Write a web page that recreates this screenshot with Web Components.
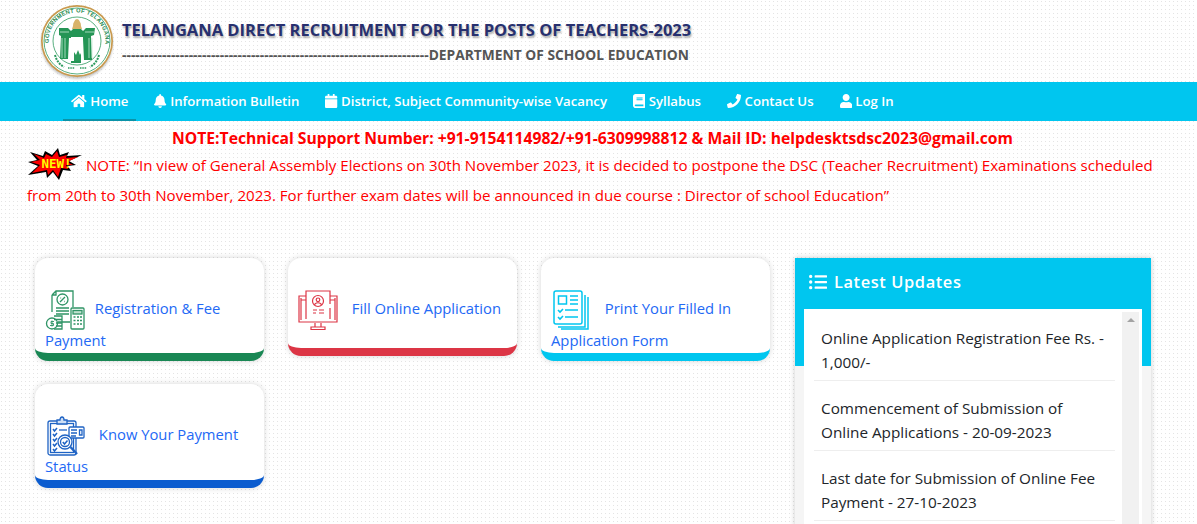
<!DOCTYPE html>
<html lang="en">
<head>
<meta charset="utf-8">
<title>Telangana DSC 2023</title>
<style>
    html, body { margin: 0; height: 524px; overflow: hidden; }
    body {
        font-family: "Open Sans", "Noto Sans", sans-serif;
        background-color: #fff;
        background-image: radial-gradient(circle at 1.5px 1.5px, #e4e4e4 0.7px, transparent 1px);
        background-size: 4px 4px;
    }
</style>
</head>
<body>
<site-header></site-header>
<nav-bar>
    <nav-item icon="home" active>Home</nav-item>
    <nav-item icon="bell">Information Bulletin</nav-item>
    <nav-item icon="calendar">District, Subject Community-wise Vacancy</nav-item>
    <nav-item icon="book">Syllabus</nav-item>
    <nav-item icon="phone">Contact Us</nav-item>
    <nav-item icon="user">Log In</nav-item>
</nav-bar>
<notice-block></notice-block>
<main-area>
    <service-card slot="cards" color="#198754" gap="6" style="--min:103px">
        <svg slot="icon" width="40" height="40" viewBox="0 0 40 40" fill="none" stroke="#2f9466" stroke-width="1.3">
            <path d="M7 5 11 1H28V17M7 5V22M7 5H11V1"/>
            <circle cx="17.5" cy="9.5" r="5.5"/><path d="M15 12 20 7M15.5 8h.6M19 11.5h.6"/>
            <path d="M11 18H24M11 21H24M11 24H24M13 32H25"/>
            <rect x="26" y="18" width="13" height="21" rx="1"/><rect x="28" y="20.5" width="9" height="3.5" fill="#bfe0cf"/>
            <path d="M28.5 27h2M32 27h2M35 27h2M28.5 30.500h2M32 30.500h2M35 30.500h2M28.500 34h2M32 34h2M35 34h2" stroke-width="1.6"/>
            <circle cx="7" cy="33.500" r="5.500"/><path d="M7 30.500v6M9 31.500H6v2h2.500v2H5" stroke-width=".9"/>
            <path d="M9 26H17V39H9M9 29.500H17M11 33H17M11 36H17"/>
        </svg>
        Registration &amp; Fee Payment
    </service-card>
    <service-card slot="cards" color="#dc3545" gap="10">
        <svg slot="icon" width="40" height="40" viewBox="0 0 40 40" fill="none" stroke="#dc3545" stroke-width="1.2">
            <path d="M8 6H1V32H39V6H32M3 8V30M37 8V30"/>
            <path d="M3 10H8M32 10H37"/>
            <path d="M8 29V1H32V14M32 18V29"/>
            <circle cx="20" cy="11" r="5.500"/><circle cx="20" cy="9.800" r="1.800"/><path d="M16.500 15c.6-3 6.400-3 7 0"/>
            <path d="M15 20H19M21 20H26M15 23H18M21 23H26"/>
            <path d="M17 33V37M23 33V37M13 39.500H27V37H13Z"/>
        </svg>
        Fill Online Application
    </service-card>
    <service-card slot="cards" color="#00c6ef" gap="11" style="--min:103px">
        <svg slot="icon" width="37" height="40" viewBox="0 0 37 40" fill="none" stroke="#00c6ef" stroke-width="1.500" style="margin-left:2px">
            <rect x="1" y="1" width="28" height="33" rx="2"/>
            <path d="M32 5V37H5M35 7V39H8"/>
            <rect x="5.500" y="6" width="8" height="8"/>
            <path d="M17 6H25M17 10H25M17 14H25M12 20H25M12 27H25" stroke-width="1.400"/>
            <path d="M5 20 7 22 10 19M5 27 7 29 10 26" stroke-width="1.600"/>
        </svg>
        Print Your Filled In Application Form
    </service-card>
    <service-card slot="cards" color="#0b5ccf" gap="10" style="--min:104px">
        <svg slot="icon" width="38" height="40" viewBox="0 0 38 40" fill="none" stroke="#1f63c4" stroke-width="1.300" style="margin-left:2px">
            <rect x="1" y="5" width="28" height="34" rx="2"/>
            <rect x="3.500" y="7.500" width="23" height="29"/>
            <path d="M10 8V4H13C13 0 17 0 17 4H20V8H10Z" fill="#cfe0f6"/>
            <path d="M6 13 7.500 15 10 12M6 18 7.500 20 10 17M6 23 7.500 25 10 22M6 28 7.500 30 10 27M6 33 7.500 35 10 32" stroke-width="1.500"/>
            <path d="M12 14H20"/>
            <rect x="22" y="11" width="15" height="11" rx="1" fill="#fff"/>
            <path d="M24 14H30M24 17H30M24 20H29M32.500 14H35V19H32.500Z"/>
            <circle cx="18" cy="26" r="7" fill="#fff"/><circle cx="18" cy="26" r="4.500"/>
            <path d="M15.800 26 17.500 28 20.500 24.500" stroke-width="1.500"/>
            <path d="M23.500 31 30 38" stroke-width="2.400"/>
        </svg>
        Know Your Payment Status
    </service-card>
    <updates-panel slot="side">
        <update-item>Online Application Registration Fee Rs. - 1,000/-</update-item>
        <update-item>Commencement of Submission of Online Applications - 20-09-2023</update-item>
        <update-item>Last date for Submission of Online Fee Payment - 27-10-2023</update-item>
    </updates-panel>
</main-area>

<script>
const ICONS = {
    home: ["0 0 576 512", "M280.37 148.26L96 300.11V464a16 16 0 0 0 16 16l112.06-.29a16 16 0 0 0 15.92-16V368a16 16 0 0 1 16-16h64a16 16 0 0 1 16 16v95.64a16 16 0 0 0 16 16.05L464 480a16 16 0 0 0 16-16V300L295.67 148.26a12.19 12.19 0 0 0-15.3 0zM571.6 251.47L488 182.56V44.05a12 12 0 0 0-12-12h-56a12 12 0 0 0-12 12v72.61L318.47 43a48 48 0 0 0-61 0L4.34 251.47a12 12 0 0 0-1.6 16.9l25.5 31A12 12 0 0 0 45.15 301l235.22-193.74a12.19 12.19 0 0 1 15.3 0L530.9 301a12 12 0 0 0 16.9-1.6l25.5-31a12 12 0 0 0-1.7-16.93z"],
    bell: ["0 0 448 512", "M224 512c35.32 0 63.97-28.65 63.97-64H160.03c0 35.35 28.65 64 63.97 64zm215.39-149.71c-19.32-20.76-55.47-51.99-55.47-154.29 0-77.7-54.48-139.9-127.94-155.16V32c0-17.67-14.32-32-31.98-32s-31.98 14.33-31.98 32v20.84C118.56 68.1 64.08 130.3 64.08 208c0 102.3-36.15 133.53-55.47 154.29-6 6.45-8.66 14.16-8.61 21.71.11 16.4 12.98 32 32.1 32h383.8c19.12 0 32-15.6 32.1-32 .05-7.55-2.61-15.27-8.61-21.71z"],
    calendar: ["0 0 448 512", "M12 192h424c6.6 0 12 5.4 12 12v260c0 26.5-21.5 48-48 48H48c-26.5 0-48-21.5-48-48V204c0-6.6 5.4-12 12-12zm436-44v-36c0-26.5-21.5-48-48-48h-48V12c0-6.6-5.4-12-12-12h-40c-6.6 0-12 5.4-12 12v52H160V12c0-6.6-5.4-12-12-12h-40c-6.6 0-12 5.4-12 12v52H48C21.5 64 0 85.5 0 112v36c0 6.6 5.4 12 12 12h424c6.6 0 12-5.4 12-12z"],
    book: ["0 0 448 512", "M448 360V24c0-13.3-10.7-24-24-24H96C43 0 0 43 0 96v320c0 53 43 96 96 96h328c13.3 0 24-10.7 24-24v-16c0-7.5-3.5-14.3-8.9-18.7-4.2-15.4-4.2-59.3 0-74.7 5.4-4.3 8.9-11.1 8.9-18.6zM128 134c0-3.3 2.7-6 6-6h212c3.3 0 6 2.7 6 6v20c0 3.3-2.7 6-6 6H134c-3.3 0-6-2.7-6-6v-20zm0 64c0-3.3 2.7-6 6-6h212c3.3 0 6 2.7 6 6v20c0 3.3-2.7 6-6 6H134c-3.3 0-6-2.7-6-6v-20zm253.4 250H96c-17.7 0-32-14.3-32-32 0-17.6 14.4-32 32-32h285.4c-1.9 17.1-1.9 46.9 0 64z"],
    phone: ["0 0 512 512", "M493.4 24.6l-104-24c-11.3-2.6-22.9 3.3-27.5 13.9l-48 112c-4.2 9.8-1.4 21.3 6.9 28l60.6 49.6c-36 76.7-98.9 140.5-177.2 177.2l-49.6-60.6c-6.8-8.3-18.2-11.1-28-6.9l-112 48C3.9 366.5-2 378.1.6 389.4l24 104C27.1 504.2 36.7 512 48 512c256.1 0 464-207.5 464-464 0-11.2-7.7-20.9-18.6-23.4z"],
    user: ["0 0 448 512", "M224 256c70.7 0 128-57.3 128-128S294.7 0 224 0 96 57.3 96 128s57.3 128 128 128zm89.6 32h-16.7c-22.2 10.2-46.9 16-72.9 16s-50.6-5.8-72.9-16h-16.7C60.2 288 0 348.2 0 422.4V464c0 26.5 21.5 48 48 48h352c26.5 0 48-21.5 48-48v-41.6c0-74.2-60.2-134.4-134.4-134.4z"],
    list: ["0 0 512 512", "M48 48a48 48 0 1 0 48 48 48 48 0 0 0-48-48zm0 160a48 48 0 1 0 48 48 48 48 0 0 0-48-48zm0 160a48 48 0 1 0 48 48 48 48 0 0 0-48-48zm448 16H176a16 16 0 0 0-16 16v32a16 16 0 0 0 16 16h320a16 16 0 0 0 16-16v-32a16 16 0 0 0-16-16zm0-320H176a16 16 0 0 0-16 16v32a16 16 0 0 0 16 16h320a16 16 0 0 0 16-16V80a16 16 0 0 0-16-16zm0 160H176a16 16 0 0 0-16 16v32a16 16 0 0 0 16 16h320a16 16 0 0 0 16-16v-32a16 16 0 0 0-16-16z"]
};

function faIcon(name, height) {
    const [box, d] = ICONS[name];
    const parts = box.split(" ");
    const width = height * parts[2] / parts[3];
    return `<svg width="${width}" height="${height}" viewBox="${box}" fill="currentColor"><path d="${d}"/></svg>`;
}

class StateEmblem extends HTMLElement {
    constructor() {
        super();
        this.attachShadow({ mode: "open" }).innerHTML = `
            <style>
                :host { display: block; width: 74px; height: 78px; }
                svg { display: block; }
                text { font-family: "Liberation Sans", sans-serif; }
            </style>
            <svg width="74" height="78" viewBox="0 0 74 78">
                <defs>
                    <path id="ring" d="M9.400 44a28.300 28.300 0 1 1 55.200 0"/>
                    <filter id="soft"><feGaussianBlur stdDeviation="1.200"/></filter>
                </defs>
                <circle cx="37" cy="40" r="36" fill="#999" opacity=".55" filter="url(#soft)"/>
                <circle cx="37" cy="38" r="36" fill="#c99a4e"/>
                <circle cx="37" cy="38" r="34.300" fill="#fff"/>
                <circle cx="37" cy="38" r="33" fill="none" stroke="#2e9b5f" stroke-width=".8"/>
                <circle cx="37" cy="38" r="24" fill="#fff" stroke="#2e9b5f" stroke-width=".8"/>
                <text font-size="5.700" font-weight="700" fill="#1f8a50" letter-spacing=".3"><textPath href="#ring" startOffset="4">GOVERNMENT OF TELANGANA</textPath></text>
                <path d="M33 23q0-3 1-4 1-3 3-3t3 3q1 1 1 4l1 3H32z" fill="#d8b36a"/>
                <path d="M19 25h9l3 3 2-2h8l2 2 3-3h9l-1 7-3 1 1 24h-8l-1-21h-2v24H31V35h-2l-1 21h-8l1-23-2-1z" fill="#249555"/>
                <rect x="31" y="34" width="12" height="24" fill="#fff"/>
                <path d="M22 35v20M25 35v20M49 35v20M52 35v20M20 29h9M45 29h9" stroke="#c7ead6" stroke-width=".8"/>
                <path d="M34 58v-9l2 3 2-5 2 5 1-2v8z" fill="#2b9a5b"/>
                <path d="M15 52q2 8 9 12M59 52q-2 8-9 12" fill="none" stroke="#2e9b5f" stroke-width="2" stroke-dasharray="2 1"/>
                <path d="M28 65h7M40 65h7" stroke="#2e9b5f" stroke-width="1.600" stroke-dasharray="1.500 .8"/>
            </svg>`;
    }
}
customElements.define("state-emblem", StateEmblem);

class SiteHeader extends HTMLElement {
    constructor() {
        super();
        this.attachShadow({ mode: "open" }).innerHTML = `
            <style>
                :host { display: flex; height: 82px; padding: 3px 0 0 40px; box-sizing: border-box; gap: 8px; }
                .text { display: flex; flex-direction: column; padding-top: 16px; white-space: nowrap; }
                h1 {
                    margin: 0;
                    font-size: 16.5px;
                    line-height: 22px;
                    font-weight: 700;
                    color: #27306f;
                    text-shadow: 1px 2px 2px #aaa;
                }
                p { margin: 4px 0 0; font-size: 13.750px; line-height: 20px; font-weight: 700; color: #555; letter-spacing: 0.02px; }
            </style>
            <state-emblem></state-emblem>
            <div class="text">
                <h1>TELANGANA DIRECT RECRUITMENT FOR THE POSTS OF TEACHERS-2023</h1>
                <p>${"-".repeat(69)}DEPARTMENT OF SCHOOL EDUCATION</p>
            </div>`;
    }
}
customElements.define("site-header", SiteHeader);

class NavBar extends HTMLElement {
    constructor() {
        super();
        this.attachShadow({ mode: "open" }).innerHTML = `
            <style>
                :host { display: flex; height: 39px; background: #00c6ef; padding-left: 63px; gap: 10px; }
            </style>
            <slot></slot>`;
    }
}
customElements.define("nav-bar", NavBar);

class NavItem extends HTMLElement {
    constructor() {
        super();
        this.attachShadow({ mode: "open" }).innerHTML = `
            <style>
                :host {
                    display: flex;
                    align-items: center;
                    gap: 3.500px;
                    height: 39px;
                    box-sizing: border-box;
                    padding: 0 8px;
                    color: #fff;
                    font-size: 13.200px;
                    font-weight: 600;
                    white-space: nowrap;
                    border-bottom: 2px solid transparent;
                }
                :host([active]) { border-bottom-color: #0a93a8; }
            </style>
            ${faIcon(this.getAttribute("icon"), 14)}
            <slot></slot>`;
    }
}
customElements.define("nav-item", NavItem);

class NoticeBlock extends HTMLElement {
    constructor() {
        super();
        this.attachShadow({ mode: "open" }).innerHTML = `
            <style>
                :host { display: block; color: #f00; padding: 5px 27px 0; }
                .support { margin: 0 -27px; padding-right: 12px; text-align: center; font-size: 15.700px; line-height: 24px; font-weight: 700; }
                .note { margin: 0; font-size: 15.100px; line-height: 30px; height: 60px; }
                .burst { display: inline-block; vertical-align: middle; margin: -6px 0 0 0; }
                text { font-family: "DejaVu Sans Mono", monospace; }
            </style>
            <p class="support">NOTE:Technical Support Number: +91-9154114982/+91-6309998812 &amp; Mail ID: helpdesktsdsc2023@gmail.com</p>
            <p class="note"><svg class="burst" width="59" height="32" viewBox="0 0 59 32">
                <path d="M3 4 16 8 18 3 25 7 31 0 33 7 42 4 40 8 55 7 42 13 49 17 41 18 44 23 36 22 32 32 26 24 20 30 19 24 1 27 11 18 1 14 10 12Z" fill="#000"/>
                <path d="M7 6 17 10 19 6 25 9 30 3 32 9 40 7 39 10 51 9 40 14 46 17 39 17 41 21 34 20 31 29 26 22 21 27 20 22 5 25 13 17 4 14 13 12Z" fill="#f00"/>
                <text x="14.500" y="19.500" font-size="12.500" font-weight="700" fill="#ff0">NEW!</text>
            </svg>NOTE: &ldquo;In view of General Assembly Elections on 30th November 2023, it is decided to postpone the DSC (Teacher Recruitment) Examinations scheduled from 20th to 30th November, 2023. For further exam dates will be announced in due course : Director of school Education&rdquo;</p>`;
    }
}
customElements.define("notice-block", NoticeBlock);

class MainArea extends HTMLElement {
    constructor() {
        super();
        this.attachShadow({ mode: "open" }).innerHTML = `
            <style>
                :host { display: flex; margin-top: 48px; padding-left: 35px; gap: 25px; align-items: flex-start; }
                .cards { display: grid; grid-template-columns: repeat(3, 229px); column-gap: 24px; row-gap: 23px; align-items: start; width: 735px; }
            </style>
            <div class="cards"><slot name="cards"></slot></div>
            <slot name="side"></slot>`;
    }
}
customElements.define("main-area", MainArea);

class ServiceCard extends HTMLElement {
    constructor() {
        super();
        this.attachShadow({ mode: "open" }).innerHTML = `
            <style>
                :host {
                    display: block;
                    box-sizing: border-box;
                    min-height: var(--min, 98px);
                    padding: 32px 9px 1px 10px;
                    background: #fff;
                    border-radius: 13px;
                    border-bottom: 8px solid ${this.getAttribute("color")};
                    box-shadow: 0 0 6px rgba(0, 0, 0, 0.16);
                    color: #2369f5;
                    font-size: 14.800px;
                    font-weight: 500;
                    line-height: 20px;
                }
                ::slotted(svg) { display: inline-block; vertical-align: middle; margin-right: ${this.getAttribute("gap")}px; }
            </style>
            <slot name="icon"></slot><slot></slot>`;
    }
}
customElements.define("service-card", ServiceCard);

class UpdatesPanel extends HTMLElement {
    constructor() {
        super();
        this.attachShadow({ mode: "open" }).innerHTML = `
            <style>
                :host {
                    display: block;
                    box-sizing: border-box;
                    width: 356px;
                    height: 420px;
                    padding: 0 9px;
                    background: linear-gradient(#00c6ef 108px, #f5f5f5 108px);
                    box-shadow: 0 0 6px rgba(0, 0, 0, 0.2);
                }
                h2 {
                    display: flex;
                    align-items: center;
                    gap: 7px;
                    margin: 0;
                    height: 51px;
                    box-sizing: border-box;
                    padding: 0 0 4px 5px;
                    color: #fff;
                    font-size: 16.400px;
                    font-weight: 600;
                    letter-spacing: 0.6px;
                }
                .box { display: flex; background: #fff; height: 300px; padding: 2px 3px; box-sizing: border-box; }
                .list { flex: 1; padding-left: 7px; padding-right: 7px; }
                .bar { width: 17px; margin-top: 1px; background: #f1f1f1; flex: none; position: relative; }
                .bar::before {
                    content: "";
                    position: absolute;
                    left: 5px;
                    top: 6px;
                    border: 4px solid transparent;
                    border-top: 0;
                    border-bottom: 4px solid #a3a3a3;
                }
            </style>
            <h2>${faIcon("list", 18)}Latest Updates</h2>
            <div class="box"><div class="list"><slot></slot></div><div class="bar"></div></div>`;
    }
}
customElements.define("updates-panel", UpdatesPanel);

class UpdateItem extends HTMLElement {
    constructor() {
        super();
        this.attachShadow({ mode: "open" }).innerHTML = `
            <style>
                :host {
                    display: block;
                    box-sizing: border-box;
                    height: 70px;
                    padding: 15px 7px 6px;
                    border-bottom: 1px solid #eee;
                    color: #212529;
                    font-size: 15.300px;
                    line-height: 24px;
                }
            </style>
            <slot></slot>`;
    }
}
customElements.define("update-item", UpdateItem);
</script>
</body>
</html>
